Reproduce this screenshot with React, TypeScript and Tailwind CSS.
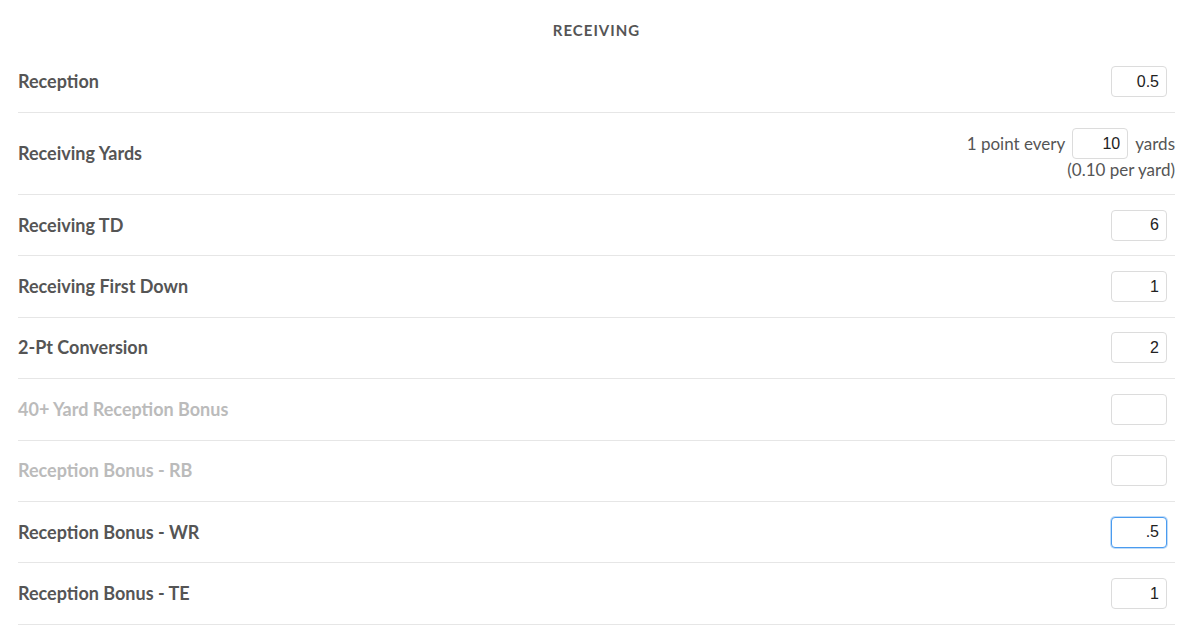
import React from 'react';

interface Row {
  label: string;
  value: string;
  disabled?: boolean;
  focused?: boolean;
}

const ROWS: Row[] = [
  { label: 'Receiving TD', value: '6' },
  { label: 'Receiving First Down', value: '1' },
  { label: '2-Pt Conversion', value: '2' },
  { label: '40+ Yard Reception Bonus', value: '', disabled: true },
  { label: 'Reception Bonus - RB', value: '', disabled: true },
  { label: 'Reception Bonus - WR', value: '.5', focused: true },
  { label: 'Reception Bonus - TE', value: '1' },
];

function PointsInput({ value, focused }: { value: string; focused?: boolean }) {
  return (
    <input
      readOnly
      value={value}
      className={
        focused
          ? 'w-[56px] h-[31px] rounded-[4px] border border-[#4a9bef] shadow-[0_0_0_1px_rgba(74,155,239,0.35)] bg-white pl-2 pr-[7px] text-right text-[16px] text-[#222] outline-none font-["Liberation_Sans",Arial,sans-serif]'
          : 'w-[56px] h-[31px] rounded-[4px] border border-[#dcdcdc] bg-white pl-2 pr-[7px] text-right text-[16px] text-[#222] outline-none font-["Liberation_Sans",Arial,sans-serif]'
      }
    />
  );
}

export default function App() {
  return (
    <div className="w-[1200px] h-[635px] bg-white font-['Lato','Noto_Sans',sans-serif] text-[#555]">
      <div className="ml-[18px] w-[1157px]">
        <div className="h-[51px] flex items-center justify-center pt-[10px]">
          <h3 className="text-[15px] font-bold tracking-[1px] text-[#555]">RECEIVING</h3>
        </div>

        <div className="h-[62px] flex items-center justify-between border-b border-[#e6e6e6]">
          <span className="text-[18px] font-bold">Reception</span>
          <div className="mr-[8px]">
            <PointsInput value="0.5" />
          </div>
        </div>

        <div className="h-[82px] flex items-center justify-between border-b border-[#e6e6e6]">
          <span className="text-[18px] font-bold">Receiving Yards</span>
          <div className="flex flex-col items-end text-[17px] pt-[2px]">
            <div className="flex items-center gap-[7px]">
              <span>1 point every</span>
              <PointsInput value="10" />
              <span>yards</span>
            </div>
            <span className="leading-[22px]">(0.10 per yard)</span>
          </div>
        </div>

        {ROWS.map((row) => (
          <div
            key={row.label}
            className="h-[61.4px] flex items-center justify-between border-b border-[#e6e6e6]"
          >
            <span className={row.disabled ? 'text-[18px] font-bold text-[#bbbbbb]' : 'text-[18px] font-bold'}>
              {row.label}
            </span>
            <div className="mr-[8px]">
              <PointsInput value={row.value} focused={row.focused} />
            </div>
          </div>
        ))}
      </div>
    </div>
  );
}
